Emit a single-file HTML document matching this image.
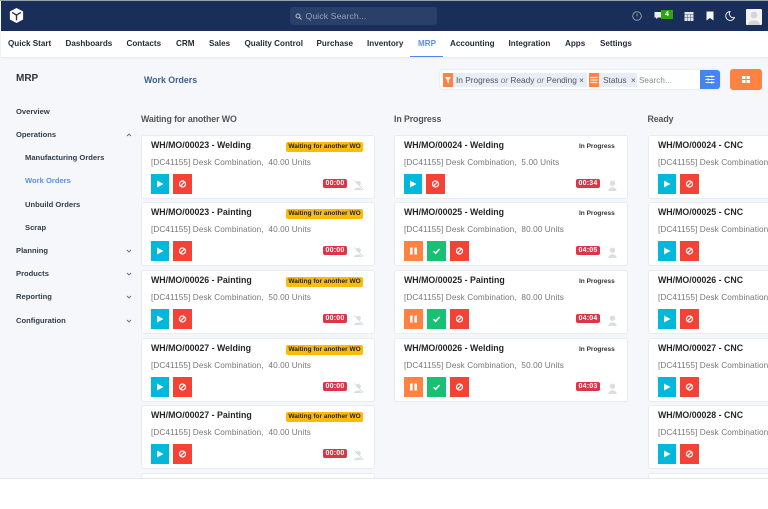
<!DOCTYPE html>
<html><head><meta charset="utf-8"><style>
html,body{margin:0;padding:0;width:768px;height:509px;overflow:hidden;background:#f5f7fa}
body{position:relative;font-family:"Liberation Sans",sans-serif}
.a{position:absolute;white-space:nowrap}
.nav{position:absolute;top:38px;font-size:8.1px;line-height:11px;font-weight:bold;color:#1f2937;white-space:nowrap}
.s{position:absolute;font-size:7.6px;line-height:11px;font-weight:bold;color:#333c4a;white-space:nowrap}
.chev{position:absolute;left:126px;width:6px;height:6px}
.h{position:absolute;top:113px;font-size:8.8px;line-height:13px;font-weight:bold;color:#555;white-space:nowrap;letter-spacing:-.1px}
.c{position:absolute;width:232px;height:62px;background:#fff;border:1px solid #e8ebef;border-radius:3px;overflow:hidden}
.c3{width:120px;border-right:none;border-radius:3px 0 0 3px}
.last{height:34px}
.t{position:absolute;left:9px;top:4px;font-size:8.8px;line-height:11px;font-weight:bold;color:#262626;white-space:nowrap}
.d{position:absolute;left:9px;top:21px;font-size:8.2px;line-height:12px;color:#777;white-space:nowrap;letter-spacing:.1px}
.b{position:absolute;left:144px;top:6px;width:77px;height:10px;background:#fbbc09;border-radius:2px;font-size:6.5px;line-height:10px;font-weight:bold;color:#222;text-align:center;white-space:nowrap}
.p{position:absolute;left:184px;top:6px;font-size:6.5px;line-height:10px;font-weight:bold;color:#333;white-space:nowrap}
.btn{position:absolute;top:38px;width:19px;height:20px}
.btn svg{position:absolute;left:0;top:0;width:19px;height:20px}
.tm{position:absolute;left:181px;top:43px;width:24px;height:9px;background:#dc3545;border-radius:2px;color:#fff;font-size:7px;line-height:9px;font-weight:bold;text-align:center;letter-spacing:.2px}
.u{position:absolute;left:211px;top:44px;width:11px;height:11px}
.chip{position:absolute;top:73px;height:14px;background:#e8edf7;color:#555;font-size:8.3px;line-height:14px;white-space:nowrap}
</style></head><body>
<svg width="0" height="0" style="position:absolute"><defs>
<symbol id="pl" viewBox="0 0 19 20"><rect width="18" height="20" fill="#00b8d9"/><path d="M6 6.500L12.500 10L6 13.500Z" fill="#fff"/></symbol>
<symbol id="st" viewBox="0 0 19 20"><rect width="19" height="20" fill="#f44336"/><circle cx="9.500" cy="10" r="3" fill="none" stroke="#fff" stroke-width="1.200"/><path d="M7.500 12L11.500 8" stroke="#fff" stroke-width="1.200"/></symbol>
<symbol id="pa" viewBox="0 0 19 20"><rect width="19" height="20" fill="#ff8242"/><rect x="6" y="6.500" width="2.600" height="7" fill="#fff"/><rect x="10.400" y="6.500" width="2.600" height="7" fill="#fff"/></symbol>
<symbol id="ok" viewBox="0 0 19 20"><rect width="19" height="20" fill="#16c172"/><path d="M6.500 10.200L8.600 12.200L12.600 8" fill="none" stroke="#fff" stroke-width="1.600"/></symbol>
<symbol id="uo" viewBox="0 0 12 12"><circle cx="6" cy="3.500" r="2.600" fill="#dcdfe2"/><path d="M1 11C1 7.500 11 7.500 11 11Z" fill="#dcdfe2"/><path d="M1 1L11 11" stroke="#fff" stroke-width="1"/><path d="M1.500 .5L11.500 10.500" stroke="#cfd2d5" stroke-width=".8"/></symbol>
<symbol id="ui" viewBox="0 0 12 12"><circle cx="6" cy="3.500" r="3" fill="#dcdfe2"/><path d="M1.500 12C1.500 6.500 10.500 6.500 10.500 12Z" fill="#dcdfe2"/></symbol>
</defs></svg>

<!-- top bar -->
<div class="a" style="left:0;top:0;width:768px;height:1px;background:#9aa0a8"></div>
<div class="a" style="left:1px;top:1px;width:767px;height:30px;background:#192e58"></div>
<svg class="a" style="left:9px;top:7px" width="15" height="17" viewBox="0 0 17 19"><path d="M8.500 1L16 5V14L8.500 18L1 14V5Z" fill="#fff"/><path d="M3.500 6L8.500 9L13.500 6M8.500 9V15" fill="none" stroke="#192e58" stroke-width="1.500"/></svg>
<div class="a" style="left:290px;top:7px;width:147px;height:18px;background:#2a4068;border-radius:3px"></div>
<svg class="a" style="left:295px;top:13px" width="7" height="7" viewBox="0 0 7 7"><circle cx="3" cy="3" r="2" fill="none" stroke="#b4bccb" stroke-width="1"/><path d="M4.500 4.500L6.500 6.500" stroke="#b4bccb"/></svg>
<div class="a" style="left:305.500px;top:10px;font-size:8.700px;line-height:12px;color:#98a3b8;letter-spacing:.1px">Quick Search...</div>
<svg class="a" style="left:632px;top:11px" width="10" height="10" viewBox="0 0 10 10"><circle cx="5" cy="5" r="4.300" fill="none" stroke="#8c97aa" stroke-width="1"/><path d="M5 2.500V5.500" stroke="#8c97aa"/></svg>
<svg class="a" style="left:654px;top:11px" width="11" height="9" viewBox="0 0 11 9"><path d="M.5 1H9.500V6.500H4L2 8V6.500H.5Z" fill="#eef1f6"/></svg>
<div class="a" style="left:661px;top:10px;width:12px;height:9px;background:#2aa70c;color:#fff;font-size:7px;line-height:9px;font-weight:bold;text-align:center">4</div>
<svg class="a" style="left:684px;top:11px" width="10" height="10" viewBox="0 0 10 10"><rect x=".5" y="1" width="9" height="9" fill="#dfe3ea"/><path d="M.5 3.500H9.500M3 1V0M7 1V0M.5 6.500H9.500M3.500 3.500V10M6.500 3.500V10" stroke="#4a5c80" stroke-width=".5"/></svg>
<svg class="a" style="left:706px;top:11px" width="8" height="10" viewBox="0 0 8 10"><path d="M.5 .5H7.500V9.500L4 7L.5 9.500Z" fill="#f3f5f8"/></svg>
<svg class="a" style="left:725px;top:11px" width="10" height="10" viewBox="0 0 10 10"><path d="M5 .5A4.500 4.500 0 1 0 9.500 6.500A4 4 0 0 1 5 .5Z" fill="none" stroke="#e4e8ee" stroke-width="1"/></svg>
<div class="a" style="left:746px;top:9px;width:16px;height:16px;background:#f3f3f3;border-radius:1px;overflow:hidden"><svg width="16" height="16" viewBox="0 0 16 16"><circle cx="8" cy="6" r="3.300" fill="#d4d4d4"/><path d="M2 16C2 10 14 10 14 16Z" fill="#d4d4d4"/></svg></div>

<!-- nav -->
<div class="a" style="left:1px;top:31px;width:767px;height:26px;background:#fff;box-shadow:0 1px 2px rgba(0,0,0,.07)"></div>
<div class="nav" style="left:8px">Quick Start</div>
<div class="nav" style="left:65.500px">Dashboards</div>
<div class="nav" style="left:126.500px">Contacts</div>
<div class="nav" style="left:176px">CRM</div>
<div class="nav" style="left:209px">Sales</div>
<div class="nav" style="left:244.500px">Quality Control</div>
<div class="nav" style="left:316.500px">Purchase</div>
<div class="nav" style="left:367px">Inventory</div>
<div class="nav" style="left:418px;color:#5b8def">MRP</div>
<div class="a" style="left:410px;top:56px;width:33px;height:1px;background:#4d86ee"></div>
<div class="nav" style="left:450px">Accounting</div>
<div class="nav" style="left:508.500px">Integration</div>
<div class="nav" style="left:565px">Apps</div>
<div class="nav" style="left:600px">Settings</div>

<!-- sidebar -->
<div class="a" style="left:16px;top:72px;font-size:10px;line-height:14px;font-weight:bold;color:#333">MRP</div>
<div class="s" style="left:16px;top:106px">Overview</div>
<div class="s" style="left:16px;top:129px">Operations</div>
<div class="s" style="left:25px;top:152px">Manufacturing Orders</div>
<div class="s" style="left:25px;top:175px;color:#5b8def">Work Orders</div>
<div class="s" style="left:25px;top:198.500px">Unbuild Orders</div>
<div class="s" style="left:25px;top:222px">Scrap</div>
<div class="s" style="left:16px;top:245px">Planning</div>
<div class="s" style="left:16px;top:268px">Products</div>
<div class="s" style="left:16px;top:291px">Reporting</div>
<div class="s" style="left:16px;top:314.500px">Configuration</div>
<svg class="chev" style="top:132px" viewBox="0 0 6 6"><path d="M1 4L3 2L5 4" fill="none" stroke="#667" stroke-width=".9"/></svg>
<svg class="chev" style="top:248px" viewBox="0 0 6 6"><path d="M1 2L3 4L5 2" fill="none" stroke="#667" stroke-width=".9"/></svg>
<svg class="chev" style="top:271px" viewBox="0 0 6 6"><path d="M1 2L3 4L5 2" fill="none" stroke="#667" stroke-width=".9"/></svg>
<svg class="chev" style="top:294px" viewBox="0 0 6 6"><path d="M1 2L3 4L5 2" fill="none" stroke="#667" stroke-width=".9"/></svg>
<svg class="chev" style="top:317.500px" viewBox="0 0 6 6"><path d="M1 2L3 4L5 2" fill="none" stroke="#667" stroke-width=".9"/></svg>

<!-- header tools -->
<div class="a" style="left:144px;top:74px;font-size:8.800px;line-height:12px;font-weight:bold;color:#3c5f8f">Work Orders</div>
<div class="a" style="left:440px;top:70px;width:280px;height:19px;background:#fff;border-radius:3px;box-shadow:0 0 2px rgba(0,0,0,.12)"></div>
<div class="chip" style="left:443px;width:144px;padding-left:13px;box-sizing:border-box">In Progress <i style="color:#777">or</i> Ready <i style="color:#777">or</i> Pending <span>×</span></div>
<div class="a" style="left:443px;top:73px;width:10px;height:14px;background:#ff8242"></div>
<svg class="a" style="left:445px;top:76px" width="6" height="8" viewBox="0 0 6 8"><path d="M0 1H6L3.800 4V7.500L2.200 6.500V4Z" fill="#fff"/></svg>
<div class="chip" style="left:589px;width:48px;padding-left:14px;box-sizing:border-box">Status <span style="margin-left:2px">×</span></div>
<div class="a" style="left:589px;top:73px;width:10px;height:14px;background:#ff8242"></div>
<svg class="a" style="left:590px;top:76px" width="8" height="8" viewBox="0 0 8 8"><path d="M.5 1.500H7.500M.5 4H7.500M.5 6.500H7.500" stroke="#ffe3d3" stroke-width="1.200"/></svg>
<div class="a" style="left:639px;top:75px;font-size:8px;line-height:11px;color:#888;letter-spacing:.1px">Search...</div>
<div class="a" style="left:700px;top:70px;width:20px;height:19px;background:#4285f4;border-radius:0 3px 3px 0"></div>
<svg class="a" style="left:705px;top:75px" width="10" height="9" viewBox="0 0 10 9"><path d="M.5 1.500H9.500M.5 4.500H9.500M.5 7.500H9.500" stroke="#fff" stroke-width=".9"/><rect x="6" y=".5" width="1.500" height="2" fill="#fff"/><rect x="2.500" y="3.500" width="1.500" height="2" fill="#fff"/><rect x="6" y="6.500" width="1.500" height="2" fill="#fff"/></svg>
<div class="a" style="left:730px;top:69px;width:32px;height:21px;background:#ff8242;border-radius:3px"></div>
<svg class="a" style="left:742px;top:76px" width="8" height="7" viewBox="0 0 8 7"><path d="M0 0H3.500V3H0ZM4.500 0H8V3H4.500ZM0 4H3.500V7H0ZM4.500 4H8V7H4.500Z" fill="#fff"/></svg>

<div class="h" style="left:141px">Waiting for another WO</div>
<div class="h" style="left:394px">In Progress</div>
<div class="h" style="left:647.500px">Ready</div>

<!-- column 1 -->
<div class="c" style="left:141px;top:135px"><div class="t">WH/MO/00023 - Welding</div><div class="b">Waiting for another WO</div><div class="d">[DC41155] Desk Combination,&nbsp; 40.00 Units</div><div class="btn" style="left:9px"><svg><use href="#pl"/></svg></div><div class="btn" style="left:31px"><svg><use href="#st"/></svg></div><div class="tm">00:00</div><svg class="u"><use href="#uo"/></svg></div>
<div class="c" style="left:141px;top:202px"><div class="t">WH/MO/00023 - Painting</div><div class="b">Waiting for another WO</div><div class="d">[DC41155] Desk Combination,&nbsp; 40.00 Units</div><div class="btn" style="left:9px"><svg><use href="#pl"/></svg></div><div class="btn" style="left:31px"><svg><use href="#st"/></svg></div><div class="tm">00:00</div><svg class="u"><use href="#uo"/></svg></div>
<div class="c" style="left:141px;top:270px"><div class="t">WH/MO/00026 - Painting</div><div class="b">Waiting for another WO</div><div class="d">[DC41155] Desk Combination,&nbsp; 50.00 Units</div><div class="btn" style="left:9px"><svg><use href="#pl"/></svg></div><div class="btn" style="left:31px"><svg><use href="#st"/></svg></div><div class="tm">00:00</div><svg class="u"><use href="#uo"/></svg></div>
<div class="c" style="left:141px;top:338px"><div class="t">WH/MO/00027 - Welding</div><div class="b">Waiting for another WO</div><div class="d">[DC41155] Desk Combination,&nbsp; 40.00 Units</div><div class="btn" style="left:9px"><svg><use href="#pl"/></svg></div><div class="btn" style="left:31px"><svg><use href="#st"/></svg></div><div class="tm">00:00</div><svg class="u"><use href="#uo"/></svg></div>
<div class="c" style="left:141px;top:405px"><div class="t">WH/MO/00027 - Painting</div><div class="b">Waiting for another WO</div><div class="d">[DC41155] Desk Combination,&nbsp; 40.00 Units</div><div class="btn" style="left:9px"><svg><use href="#pl"/></svg></div><div class="btn" style="left:31px"><svg><use href="#st"/></svg></div><div class="tm">00:00</div><svg class="u"><use href="#uo"/></svg></div>
<div class="c last" style="left:141px;top:473px"></div>

<!-- column 2 -->
<div class="c" style="left:394px;top:135px"><div class="t">WH/MO/00024 - Welding</div><div class="p">In Progress</div><div class="d">[DC41155] Desk Combination,&nbsp; 5.00 Units</div><div class="btn" style="left:9px"><svg><use href="#pl"/></svg></div><div class="btn" style="left:31px"><svg><use href="#st"/></svg></div><div class="tm">00:34</div><svg class="u" style="left:212px"><use href="#ui"/></svg></div>
<div class="c" style="left:394px;top:202px"><div class="t">WH/MO/00025 - Welding</div><div class="p">In Progress</div><div class="d">[DC41155] Desk Combination,&nbsp; 80.00 Units</div><div class="btn" style="left:9px"><svg><use href="#pa"/></svg></div><div class="btn" style="left:32px"><svg><use href="#ok"/></svg></div><div class="btn" style="left:55px"><svg><use href="#st"/></svg></div><div class="tm">04:05</div><svg class="u" style="left:212px"><use href="#ui"/></svg></div>
<div class="c" style="left:394px;top:270px"><div class="t">WH/MO/00025 - Painting</div><div class="p">In Progress</div><div class="d">[DC41155] Desk Combination,&nbsp; 80.00 Units</div><div class="btn" style="left:9px"><svg><use href="#pa"/></svg></div><div class="btn" style="left:32px"><svg><use href="#ok"/></svg></div><div class="btn" style="left:55px"><svg><use href="#st"/></svg></div><div class="tm">04:04</div><svg class="u" style="left:212px"><use href="#ui"/></svg></div>
<div class="c" style="left:394px;top:338px"><div class="t">WH/MO/00026 - Welding</div><div class="p">In Progress</div><div class="d">[DC41155] Desk Combination,&nbsp; 50.00 Units</div><div class="btn" style="left:9px"><svg><use href="#pa"/></svg></div><div class="btn" style="left:32px"><svg><use href="#ok"/></svg></div><div class="btn" style="left:55px"><svg><use href="#st"/></svg></div><div class="tm">04:03</div><svg class="u" style="left:212px"><use href="#ui"/></svg></div>

<!-- column 3 -->
<div class="c c3" style="left:648px;top:135px"><div class="t">WH/MO/00024 - CNC</div><div class="d">[DC41155] Desk Combination</div><div class="btn" style="left:9px"><svg><use href="#pl"/></svg></div><div class="btn" style="left:31px"><svg><use href="#st"/></svg></div></div>
<div class="c c3" style="left:648px;top:202px"><div class="t">WH/MO/00025 - CNC</div><div class="d">[DC41155] Desk Combination</div><div class="btn" style="left:9px"><svg><use href="#pl"/></svg></div><div class="btn" style="left:31px"><svg><use href="#st"/></svg></div></div>
<div class="c c3" style="left:648px;top:270px"><div class="t">WH/MO/00026 - CNC</div><div class="d">[DC41155] Desk Combination</div><div class="btn" style="left:9px"><svg><use href="#pl"/></svg></div><div class="btn" style="left:31px"><svg><use href="#st"/></svg></div></div>
<div class="c c3" style="left:648px;top:338px"><div class="t">WH/MO/00027 - CNC</div><div class="d">[DC41155] Desk Combination</div><div class="btn" style="left:9px"><svg><use href="#pl"/></svg></div><div class="btn" style="left:31px"><svg><use href="#st"/></svg></div></div>
<div class="c c3" style="left:648px;top:405px"><div class="t">WH/MO/00028 - CNC</div><div class="d">[DC41155] Desk Combination</div><div class="btn" style="left:9px"><svg><use href="#pl"/></svg></div><div class="btn" style="left:31px"><svg><use href="#st"/></svg></div></div>
<div class="c c3 last" style="left:648px;top:473px"></div>

<!-- footer -->
<div class="a" style="left:0;top:478px;width:768px;height:31px;background:#fff;border-top:1px solid #e4e6ea;box-sizing:border-box"></div>
</body></html>
